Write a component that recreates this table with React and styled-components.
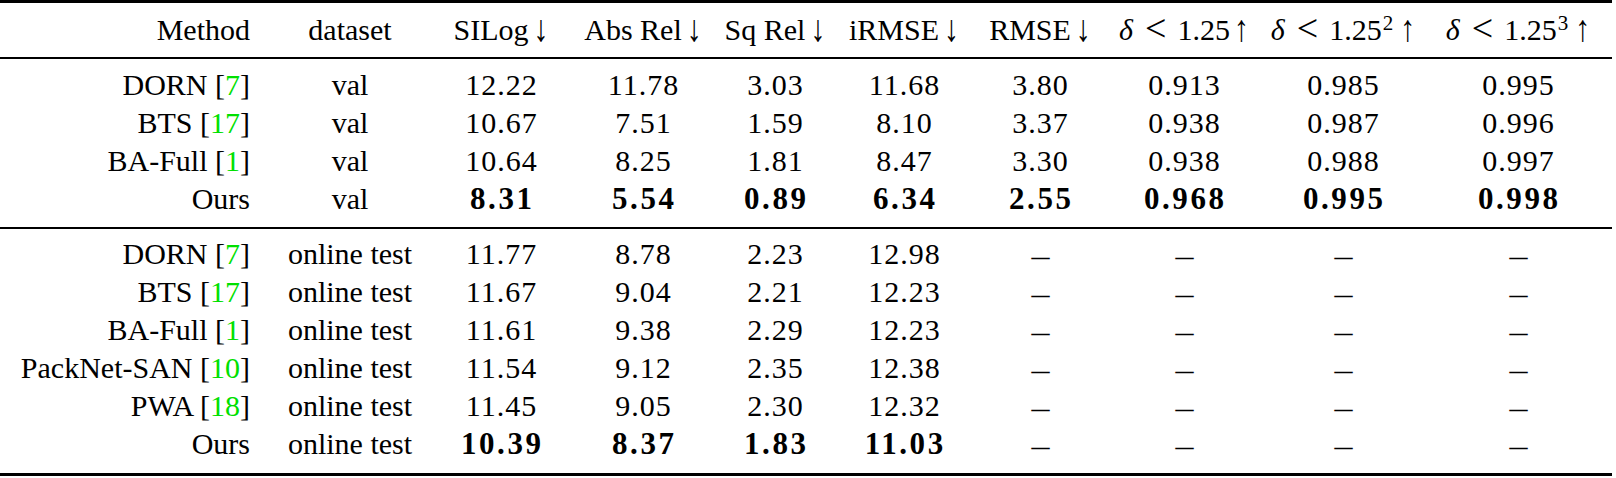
import React from 'react'
import styled, { createGlobalStyle } from 'styled-components'

const GlobalStyle = createGlobalStyle`
    html, body {
        margin: 0;
        padding: 0;
        background: #ffffff;
    }
    body {
        font-family: "Liberation Serif", "Times New Roman", serif;
        color: #000000;
    }
`

const COLUMNS = '268px 164px 138px 146px 118px 140px 132px 156px 162px 188px'

const Table = styled.div`
    width: 1612px;
    display: flex;
    flex-direction: column;
`
const Rule = styled.div`
    height: ${p => (p.$thick ? 3 : 2)}px;
    background: #000000;
`
const Section = styled.div`
    display: flex;
    flex-direction: column;
    padding-top: ${p => p.$top}px;
    padding-bottom: ${p => p.$bottom}px;
`
const Row = styled.div`
    display: grid;
    grid-template-columns: ${COLUMNS};
    height: 38px;
    font-size: 30px;
    line-height: 38px;
`
const Cell = styled.div`
    display: flex;
    justify-content: ${p => (p.$right ? 'flex-end' : 'center')};
    padding-right: ${p => (p.$right ? 18 : 0)}px;
    white-space: nowrap;
`
const Text = styled.span`
    white-space: pre;
`
const Num = styled.span`
    font-size: ${p => (p.$bold ? 31 : 30)}px;
    font-weight: ${p => (p.$bold ? 700 : 400)};
    letter-spacing: ${p => (p.$bold ? 2.6 : 1)}px;
    margin-right: ${p => (p.$bold ? -2.6 : -1)}px;
`
const Cite = styled.span`
    color: #00e000;
`
const Greek = styled.i`
    font-style: italic;
`
const Op = styled.span`
    display: inline-block;
    font-size: 38px;
    line-height: 30px;
    padding: 0 11px 0 12px;
    vertical-align: -1px;
`
const Arrow = styled.span`
    display: inline-block;
    margin-left: ${p => p.$gap}px;
    transform: scaleY(1.25);
    transform-origin: 50% 70%;
`
const Sup = styled.sup`
    font-size: 0.7em;
    line-height: 0;
    vertical-align: 0.48em;
    margin-left: 1px;
`
const Dash = styled.span`
    display: inline-block;
    transform: scaleX(1.2) translateY(2px);
`

const header = [
    'Method',
    'dataset',
    <>SILog<Arrow $gap={5}>↓</Arrow></>,
    <>Abs Rel<Arrow $gap={5}>↓</Arrow></>,
    <>Sq Rel<Arrow $gap={5}>↓</Arrow></>,
    <>iRMSE<Arrow $gap={5}>↓</Arrow></>,
    <>RMSE<Arrow $gap={5}>↓</Arrow></>,
    <><Greek>δ</Greek><Op>&lt;</Op>1.25<Arrow $gap={4}>↑</Arrow></>,
    <><Greek>δ</Greek><Op>&lt;</Op>1.25<Sup>2</Sup><Arrow $gap={7}>↑</Arrow></>,
    <><Greek>δ</Greek><Op>&lt;</Op>1.25<Sup>3</Sup><Arrow $gap={7}>↑</Arrow></>,
]

const valRows = [
    { name: 'DORN', cite: '7', values: ['12.22', '11.78', '3.03', '11.68', '3.80', '0.913', '0.985', '0.995'] },
    { name: 'BTS', cite: '17', values: ['10.67', '7.51', '1.59', '8.10', '3.37', '0.938', '0.987', '0.996'] },
    { name: 'BA-Full', cite: '1', values: ['10.64', '8.25', '1.81', '8.47', '3.30', '0.938', '0.988', '0.997'] },
    { name: 'Ours', best: true, values: ['8.31', '5.54', '0.89', '6.34', '2.55', '0.968', '0.995', '0.998'] },
]

const testRows = [
    { name: 'DORN', cite: '7', values: ['11.77', '8.78', '2.23', '12.98'] },
    { name: 'BTS', cite: '17', values: ['11.67', '9.04', '2.21', '12.23'] },
    { name: 'BA-Full', cite: '1', values: ['11.61', '9.38', '2.29', '12.23'] },
    { name: 'PackNet-SAN', cite: '10', values: ['11.54', '9.12', '2.35', '12.38'] },
    { name: 'PWA', cite: '18', values: ['11.45', '9.05', '2.30', '12.32'] },
    { name: 'Ours', best: true, values: ['10.39', '8.37', '1.83', '11.03'] },
]

function BodyRow({ row, dataset }) {
    const values = [...row.values]
    while (values.length < 8) values.push(null)
    return (
        <Row>
            <Cell $right>
                <Text>
                    {row.name}
                    {row.cite && <> [<Cite>{row.cite}</Cite>]</>}
                </Text>
            </Cell>
            <Cell><Text>{dataset}</Text></Cell>
            {values.map((v, i) => (
                <Cell key={i}>
                    {v === null
                        ? <Dash>–</Dash>
                        : <Num $bold={row.best}>{v}</Num>}
                </Cell>
            ))}
        </Row>
    )
}

function App() {
    return (
        <>
            <GlobalStyle />
            <Table>
                <Rule $thick />
                <Section $top={8} $bottom={8}>
                    <Row>
                        {header.map((h, i) => (
                            <Cell key={i} $right={i === 0}><Text>{h}</Text></Cell>
                        ))}
                    </Row>
                </Section>
                <Rule />
                <Section $top={7} $bottom={9}>
                    {valRows.map((r, i) => <BodyRow key={i} row={r} dataset="val" />)}
                </Section>
                <Rule />
                <Section $top={6} $bottom={10}>
                    {testRows.map((r, i) => <BodyRow key={i} row={r} dataset="online test" />)}
                </Section>
                <Rule $thick />
            </Table>
        </>
    )
}

export default App
